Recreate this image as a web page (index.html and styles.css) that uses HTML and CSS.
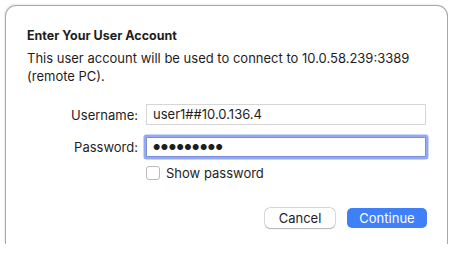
FILE: index.html
```html
<!DOCTYPE html>
<html>
<head>
<meta charset="utf-8">
<link rel="stylesheet" href="styles.css">
</head>
<body>
<div class="window">
  <h1 class="title">Enter Your User Account</h1>
  <p class="desc">This user account will be used to connect to 10.0.58.239:3389 (remote PC).</p>
  <div class="form">
    <label class="label">Username:</label>
    <div class="field">user1##10.0.136.4</div>
    <label class="label">Password:</label>
    <div class="field focused"><span class="dots">●●●●●●●●●</span></div>
    <span></span>
    <label class="check"><span class="box"></span>Show password</label>
  </div>
  <div class="buttons">
    <button class="btn">Cancel</button>
    <button class="btn primary">Continue</button>
  </div>
</div>
</body>
</html>
```
FILE: styles.css
```css
html, body {
  margin: 0;
  padding: 0;
  background: #ffffff;
}
body {
  font-family: Inter, "Noto Sans", sans-serif;
  color: #1e1e1e;
  font-size: 13px;
}
.window {
  margin: 5px 6px 0 5px;
  height: 239px;
  box-sizing: border-box;
  border: 1px solid #a8a8a8;
  border-bottom: none;
  border-radius: 11px 11px 0 0;
  padding: 22px 20px 0 21px;
  box-shadow: -1px -1px 2px rgba(0,0,0,0.08);
}
.title {
  margin: 0;
  font-size: 12.5px;
  font-weight: 700;
  line-height: 16px;
  letter-spacing: 0;
}
.desc {
  margin: 5px 0 0;
  font-size: 13px;
  line-height: 18px;
  width: 405px;
}
.form {
  margin-top: 19px;
  display: grid;
  grid-template-columns: 111px 280px;
  column-gap: 8px;
  row-gap: 12px;
  align-items: center;
}
.label {
  text-align: right;
  font-size: 13px;
}
.field {
  height: 21px;
  box-sizing: border-box;
  border: 1px solid #d6d6d6;
  padding: 0 6px;
  line-height: 19px;
  font-size: 13px;
  background: #fff;
}
.field.focused {
  border: 1px solid #7a8fd8;
  box-shadow: 0 0 0 2.5px #93a9f3;
  height: 20px;
  border-radius: 1px;
}
.dots {
  font-size: 8px;
  letter-spacing: 0.5px;
  position: relative;
  top: -2px;
}
.check {
  display: flex;
  align-items: center;
  gap: 6px;
  font-size: 13px;
  margin-top: -4px;
}
.box {
  width: 12px;
  height: 12px;
  border: 1px solid #b9b9b9;
  border-radius: 3px;
  background: #fff;
}
.buttons {
  display: flex;
  justify-content: flex-end;
  gap: 12px;
  margin-top: 27px;
}
.btn {
  font-family: Inter, "Noto Sans", sans-serif;
  font-size: 13px;
  height: 20px;
  width: 70px;
  padding: 0;
  border: none;
  border-radius: 5px;
  background: #fff;
  color: #1e1e1e;
  box-shadow: 0 0 0 0.5px rgba(0,0,0,0.25), 0 0.5px 1.5px rgba(0,0,0,0.2);
}
.btn.primary {
  width: 80px;
  background: #3f7ff7;
  color: #fff;
  box-shadow: none;
}
```
